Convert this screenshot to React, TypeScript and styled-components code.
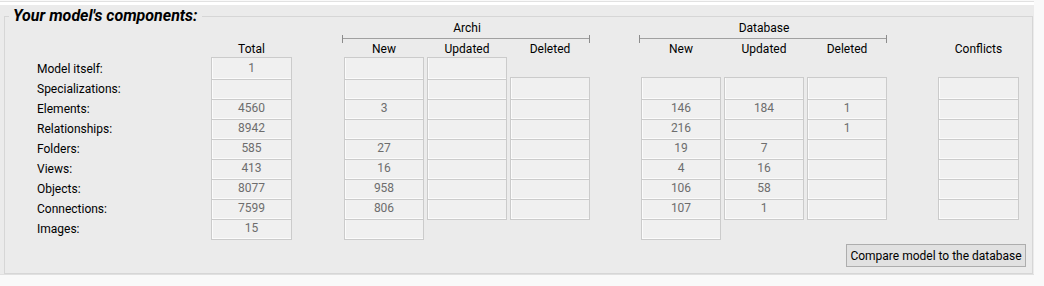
import React from 'react';
import styled, { createGlobalStyle } from 'styled-components';

const GlobalStyle = createGlobalStyle`
  html, body {
    margin: 0;
    padding: 0;
    background: #f9f9f9;
  }
  body {
    font-family: Roboto, 'Liberation Sans', sans-serif;
    font-size: 12px;
    color: #000;
  }
`;

const ROW_PITCH = 20;

const TopStrip = styled.div`
  width: 1034px;
  height: 3px;
  margin-top: 1px;
  border-top: 1px solid #e1e1e1;
  background: #ffffff;
`;

const Panel = styled.div`
  width: 1034px;
  height: 270px;
  box-sizing: border-box;
  padding: 11px 0 0 4px;
  background: #ebebeb;
  border-bottom: 1px solid #e0e0e0;
`;

const Group = styled.div`
  position: relative;
  width: 1029px;
  height: 258px;
  box-sizing: border-box;
  border: 1px solid #d6d6d6;
  display: flex;
  flex-direction: column;
`;

const Legend = styled.div`
  position: absolute;
  top: -11px;
  left: 4px;
  padding: 0 4px;
  background: #ebebeb;
  font-family: Roboto, 'Liberation Sans', sans-serif;
  font-size: 16px;
  font-weight: 700;
  font-style: italic;
  line-height: 20px;
  color: #000;
`;

const Table = styled.div`
  display: flex;
  align-items: flex-start;
  padding-left: 32px;
`;

const LabelColumn = styled.div`
  width: 174px;
  padding-top: 42px;
  display: flex;
  flex-direction: column;
`;

const RowLabel = styled.div`
  height: ${ROW_PITCH}px;
  line-height: ${ROW_PITCH}px;
  white-space: nowrap;
`;

const Column = styled.div<{ $width: number; $top?: number }>`
  width: ${(p) => p.$width}px;
  padding-top: ${(p) => p.$top ?? 0}px;
  display: flex;
  flex-direction: column;
`;

const ColumnHeader = styled.div`
  height: 14px;
  line-height: 12px;
  text-align: center;
  white-space: nowrap;
`;

const CellStack = styled.div<{ $start: number }>`
  padding-top: ${(p) => p.$start * ROW_PITCH}px;
  display: flex;
  flex-direction: column;
`;

const Cell = styled.div<{ $row: number }>`
  position: relative;
  z-index: ${(p) => 20 - p.$row};
  height: 23px;
  box-sizing: border-box;
  border: 1px solid #cbcbcb;
  background: #f0f0f0;
  box-shadow: inset 1px -1px 0 #fbfbfb;
  color: #6d6d6d;
  text-align: center;
  line-height: 21px;

  & + & {
    margin-top: -3px;
  }
`;

const Spacer = styled.div<{ $width: number }>`
  width: ${(p) => p.$width}px;
  flex: none;
`;

const ColumnGroup = styled.div`
  display: flex;
  flex-direction: column;
`;

const GroupTitle = styled.div`
  height: 18px;
  line-height: 14px;
  padding-top: 4px;
  box-sizing: border-box;
  text-align: center;
  color: #000;
`;

const Bracket = styled.div`
  position: relative;
  height: 8px;
  margin: 0 0 0 -2px;
  border-left: 1px solid #8c8c8c;
  border-right: 1px solid #8c8c8c;

  &::before {
    content: '';
    position: absolute;
    left: 0;
    right: 0;
    top: 3px;
    border-top: 1px solid #a0a0a0;
  }
`;

const SubColumns = styled.div`
  display: flex;
  gap: 3px;
`;

const Footer = styled.div`
  display: flex;
  justify-content: flex-end;
  padding: 4px 6px 0 0;
`;

const Button = styled.button`
  width: 180px;
  height: 23px;
  box-sizing: border-box;
  border: 1px solid #adadad;
  background: #e1e1e1;
  font-family: Roboto, 'Liberation Sans', sans-serif;
  font-size: 12px;
  color: #000;
  padding: 0;
  text-align: center;
`;

type ColumnSpec = { title: string; start: number; values: string[]; width?: number };

const rows = [
  'Model itself:',
  'Specializations:',
  'Elements:',
  'Relationships:',
  'Folders:',
  'Views:',
  'Objects:',
  'Connections:',
  'Images:',
];

const total: ColumnSpec = {
  title: 'Total',
  start: 0,
  width: 81,
  values: ['1', '', '4560', '8942', '585', '413', '8077', '7599', '15'],
};

const archi: ColumnSpec[] = [
  { title: 'New', start: 0, values: ['', '', '3', '', '27', '16', '958', '806', ''] },
  { title: 'Updated', start: 0, values: ['', '', '', '', '', '', '', ''] },
  { title: 'Deleted', start: 1, values: ['', '', '', '', '', '', ''] },
];

const database: ColumnSpec[] = [
  { title: 'New', start: 1, values: ['', '146', '216', '19', '4', '106', '107', ''] },
  { title: 'Updated', start: 1, values: ['', '184', '', '7', '16', '58', '1'] },
  { title: 'Deleted', start: 1, values: ['', '1', '1', '', '', '', ''] },
];

const conflicts: ColumnSpec = {
  title: 'Conflicts',
  start: 1,
  width: 81,
  values: ['', '', '', '', '', '', ''],
};

const Cells: React.FC<{ spec: ColumnSpec }> = ({ spec }) => (
  <CellStack $start={spec.start}>
    {spec.values.map((v, i) => (
      <Cell key={i} $row={spec.start + i}>
        {v}
      </Cell>
    ))}
  </CellStack>
);

const SingleColumn: React.FC<{ spec: ColumnSpec }> = ({ spec }) => (
  <Column $width={spec.width ?? 80} $top={26}>
    <ColumnHeader>{spec.title}</ColumnHeader>
    <Cells spec={spec} />
  </Column>
);

const GroupedColumns: React.FC<{ title: string; specs: ColumnSpec[] }> = ({ title, specs }) => (
  <ColumnGroup>
    <GroupTitle>{title}</GroupTitle>
    <Bracket />
    <SubColumns>
      {specs.map((s) => (
        <Column key={s.title} $width={s.width ?? 80}>
          <ColumnHeader>{s.title}</ColumnHeader>
          <Cells spec={s} />
        </Column>
      ))}
    </SubColumns>
  </ColumnGroup>
);

export default function App() {
  return (
    <>
      <GlobalStyle />
      <TopStrip />
      <Panel>
        <Group>
          <Legend>Your model's components:</Legend>
          <Table>
            <LabelColumn>
              {rows.map((r) => (
                <RowLabel key={r}>{r}</RowLabel>
              ))}
            </LabelColumn>
            <SingleColumn spec={total} />
            <Spacer $width={52} />
            <GroupedColumns title="Archi" specs={archi} />
            <Spacer $width={51} />
            <GroupedColumns title="Database" specs={database} />
            <Spacer $width={51} />
            <SingleColumn spec={conflicts} />
          </Table>
          <Footer>
            <Button>Compare model to the database</Button>
          </Footer>
        </Group>
      </Panel>
    </>
  );
}
